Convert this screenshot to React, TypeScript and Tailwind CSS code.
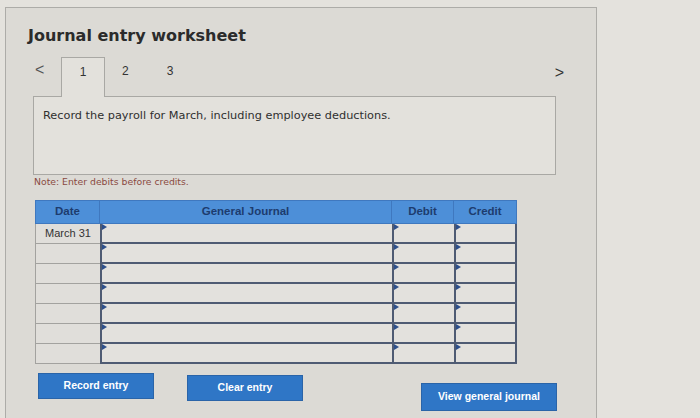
import React from "react";

const rows = ["March 31", "", "", "", "", "", ""];

function Marker() {
  return (
    <span className="absolute left-0 top-0 w-0 h-0 border-t-[3px] border-b-[3px] border-l-[5px] border-t-transparent border-b-transparent border-l-[#2e4f8a]" />
  );
}

export default function App() {
  return (
    <div className="w-[700px] h-[418px] overflow-hidden bg-[#e4e2dd] flex items-start" style={{ fontFamily: '"Liberation Sans", Arial, sans-serif' }}>
      <div className="ml-[5px] mt-[7px] w-[592px] h-[430px] border border-[#adaca8] bg-[#dcdad5] pl-[22px] pt-[17px] shrink-0">
        <h1 className="text-[16px] font-bold text-[#2b2b2b] leading-[22px]" style={{ fontFamily: '"DejaVu Sans", Verdana, sans-serif' }}>
          Journal entry worksheet
        </h1>

        <div className="mt-[9px] ml-[5px] w-[523px] flex items-end relative">
          <span className="absolute left-[2px] top-[6px] text-[#555] text-[16px] leading-none">&lt;</span>
          <span className="absolute right-[-8px] top-[9px] text-[#333] text-[16px] leading-none">&gt;</span>
          <div className="ml-[28px] w-[44px] h-[40px] border-l border-t border-r border-[#a9a8a4] bg-[#e3e1dc] -mb-px relative z-10 flex justify-center pt-[5px] text-[12px] text-[#333]">
            1
          </div>
          <div className="h-[40px] flex items-start pt-[6px] text-[12px] text-[#333]">
            <span className="ml-[17px]">2</span>
            <span className="ml-[38px]">3</span>
          </div>
        </div>
        <div className="ml-[5px] w-[523px] h-[79px] border border-[#a9a8a4] bg-[#e3e1dc] pl-[9px] pt-[11px] text-[11.3px] text-[#2f2f2f]" style={{ fontFamily: '"DejaVu Sans", Verdana, sans-serif' }}>
          Record the payroll for March, including employee deductions.
        </div>

        <div className="ml-[6px] mt-px leading-[12px] text-[9.3px] text-[#8a4a42]" style={{ fontFamily: '"DejaVu Sans", Verdana, sans-serif' }}>
          Note: Enter debits before credits.
        </div>

        <div className="ml-[7px] mt-[12px] w-[482px] grid grid-cols-[65px_292px_62px_63px]">
          <div className="h-[24px] bg-[#4d8fd8] border border-[#3f78bf] flex items-center justify-center font-bold text-[11.5px] text-[#1d3c6e]">Date</div>
          <div className="h-[24px] bg-[#4d8fd8] border-y border-r border-[#3f78bf] flex items-center justify-center font-bold text-[11.5px] text-[#1d3c6e]">General Journal</div>
          <div className="h-[24px] bg-[#4d8fd8] border-y border-r border-[#3f78bf] flex items-center justify-center font-bold text-[11.5px] text-[#1d3c6e]">Debit</div>
          <div className="h-[24px] bg-[#4d8fd8] border-y border-r border-[#3f78bf] flex items-center justify-center font-bold text-[11.5px] text-[#1d3c6e]">Credit</div>
          {rows.map((d, i) => (
            <React.Fragment key={i}>
              <div className="h-[20px] bg-[#e0deda] border-l border-b border-[#a3a29f] flex items-center justify-center text-[11px] text-[#333]">{d}</div>
              <div className="h-[20px] bg-[#e3e1dd] border-l-2 border-b-2 border-[#4f5b73] relative"><Marker /></div>
              <div className="h-[20px] bg-[#e3e1dd] border-l-2 border-b-2 border-[#4f5b73] relative"><Marker /></div>
              <div className="h-[20px] bg-[#e3e1dd] border-x-2 border-b-2 border-[#4f5b73] relative"><Marker /></div>
            </React.Fragment>
          ))}
        </div>

        <div className="mt-[9px] flex items-start text-white font-bold text-[10.5px]">
          <button className="ml-[10px] w-[116px] h-[26px] bg-[#2f76c6] border border-[#2a64a8]">Record entry</button>
          <button className="ml-[33px] mt-[2px] w-[116px] h-[26px] bg-[#2f76c6] border border-[#2a64a8]">Clear entry</button>
          <button className="ml-[118px] mt-[10px] w-[136px] h-[28px] bg-[#2f76c6] border border-[#2a64a8]">View general journal</button>
        </div>
      </div>
    </div>
  );
}
